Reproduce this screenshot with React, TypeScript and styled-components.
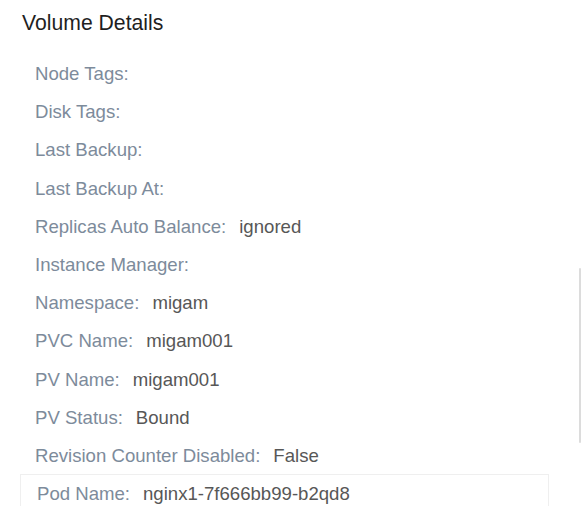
import React from 'react';
import styled, { createGlobalStyle, css } from 'styled-components';

const GlobalStyle = createGlobalStyle`
    html, body {
        margin: 0;
        padding: 0;
        background: #fff;
        font-family: "Liberation Sans", Arial, sans-serif;
    }
`;

const StyledPanel = styled.div`
    position: relative;
    width: 581px;
    height: 506px;
    overflow: hidden;
    padding-top: 11px;
    box-sizing: border-box;
`;

const StyledTitle = styled.h3`
    margin: 0 0 19px 22px;
    font-size: 21.2px;
    line-height: 24px;
    font-weight: 400;
    color: #1f1f1f;
`;

const StyledList = styled.div`
    display: flex;
    flex-direction: column;
    margin-left: 20px;
    width: 529px;
`;

const StyledRow = styled.div<{ $active?: boolean }>`
    display: flex;
    align-items: center;
    gap: 13px;
    height: 38.2px;
    flex-shrink: 0;
    padding: 2px 0 0 15px;
    box-sizing: border-box;
    font-size: 18.6px;

    ${({ $active }) => $active && css`
        border: 1px solid #efefef;
        padding-left: 16px;
    `}
`;

const StyledLabel = styled.span`
    color: #7d8b9b;
`;

const StyledValue = styled.span`
    color: #575757;
`;

const StyledScrollThumb = styled.div`
    position: absolute;
    right: 0;
    top: 268px;
    width: 2px;
    height: 175px;
    background: #dcdcdc;
    border-radius: 1px;
`;

const details: { label: string; value?: string }[] = [
    { label: 'Node Tags:' },
    { label: 'Disk Tags:' },
    { label: 'Last Backup:' },
    { label: 'Last Backup At:' },
    { label: 'Replicas Auto Balance:', value: 'ignored' },
    { label: 'Instance Manager:' },
    { label: 'Namespace:', value: 'migam' },
    { label: 'PVC Name:', value: 'migam001' },
    { label: 'PV Name:', value: 'migam001' },
    { label: 'PV Status:', value: 'Bound' },
    { label: 'Revision Counter Disabled:', value: 'False' },
    { label: 'Pod Name:', value: 'nginx1-7f666bb99-b2qd8' },
];

const App = () => (
    <>
        <GlobalStyle />
        <StyledPanel>
            <StyledTitle>Volume Details</StyledTitle>
            <StyledList>
                {details.map(({ label, value }) => (
                    <StyledRow key={label} $active={label === 'Pod Name:'}>
                        <StyledLabel>{label}</StyledLabel>
                        {value && <StyledValue>{value}</StyledValue>}
                    </StyledRow>
                ))}
            </StyledList>
            <StyledScrollThumb />
        </StyledPanel>
    </>
);

export default App;
